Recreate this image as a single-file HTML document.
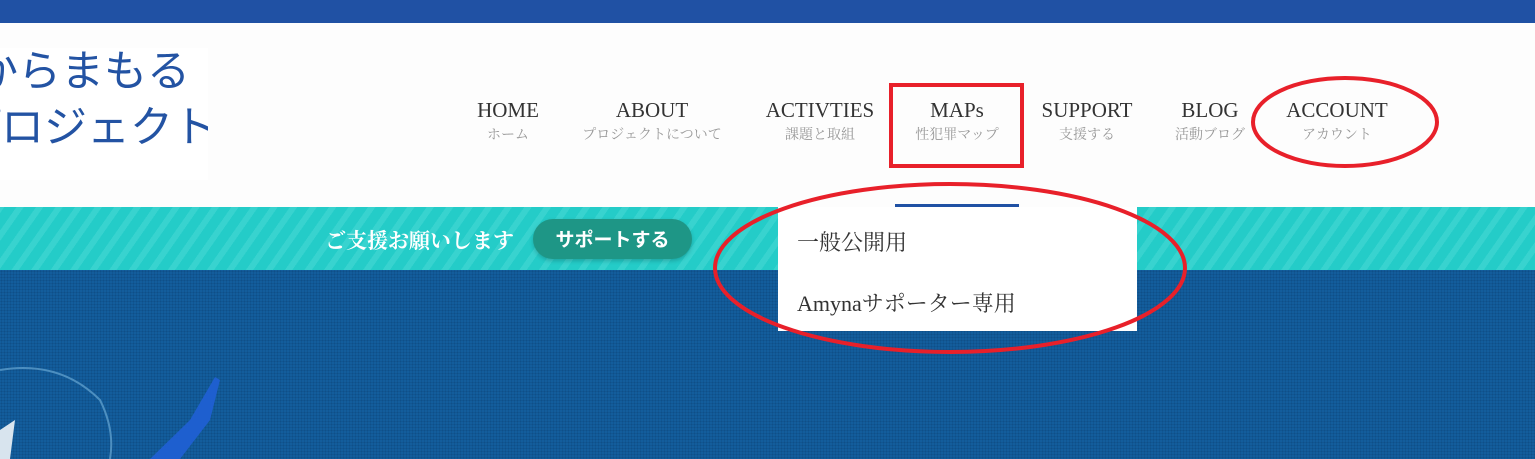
<!DOCTYPE html>
<html><head><meta charset="utf-8"><style>
*{margin:0;padding:0;box-sizing:border-box}
body{width:1535px;height:459px;overflow:hidden;position:relative;background:#fdfdfd;font-family:"Liberation Serif","Noto Serif CJK SC",serif}
.top{position:absolute;left:0;top:0;width:1535px;height:23px;background:#2051a4}
.logo{position:absolute;left:0;top:48px;width:208px;height:132px;background:#fff;color:#2353a3;font-family:"Liberation Sans","Noto Sans CJK JP",sans-serif;font-size:43px;line-height:48px;overflow:hidden}
.logo div{position:absolute;white-space:nowrap}
.nav{position:absolute;top:97px;text-align:center;transform:translateX(-50%);white-space:nowrap}
.nav b{display:block;font-weight:normal;font-size:21px;color:#333;line-height:26px}
.nav i{display:block;font-style:normal;font-size:14px;color:#999;line-height:22px;font-family:"Noto Serif CJK SC",serif}
.band{position:absolute;left:0;top:207px;width:1535px;height:63px;background:repeating-linear-gradient(-55deg,#24ccc8 0 10px,#38d3cf 10px 16px)}
.hero{position:absolute;left:0;top:270px;width:1535px;height:189px;background:#135d9c;background-image:radial-gradient(#0f4f88 40%,transparent 41%);background-size:3px 3px}
.t1{position:absolute;left:325px;top:225px;color:#fff;font-weight:bold;font-size:21px;font-family:"Noto Serif CJK SC",serif}
.btn{position:absolute;left:533px;top:219px;width:159px;height:40px;border-radius:20px;background:#1e9686;color:#fff;font-weight:bold;font-size:19px;text-align:center;line-height:40px;font-family:"Noto Sans CJK JP",sans-serif;box-shadow:0 2px 4px rgba(0,0,0,.2)}
.dd{position:absolute;left:778px;top:207px;width:359px;height:124px;background:#fff}
.dd div{position:absolute;left:19px;font-size:22px;color:#333;font-family:"Liberation Serif","Noto Serif CJK SC",serif}
.ul{position:absolute;left:895px;top:204px;width:124px;height:3px;background:#2051a4}
svg{position:absolute;left:0;top:0}
</style></head><body>
<div class="top"></div>
<div class="logo"><div style="left:-25px;top:0">からまもる</div><div style="left:-42px;top:56px">プロジェクト</div></div>
<div class="nav" style="left:508px"><b>HOME</b><i>ホーム</i></div>
<div class="nav" style="left:652px"><b>ABOUT</b><i>プロジェクトについて</i></div>
<div class="nav" style="left:820px"><b>ACTIVTIES</b><i>課題と取組</i></div>
<div class="nav" style="left:957px"><b>MAPs</b><i>性犯罪マップ</i></div>
<div class="nav" style="left:1087px"><b>SUPPORT</b><i>支援する</i></div>
<div class="nav" style="left:1210px"><b>BLOG</b><i>活動ブログ</i></div>
<div class="nav" style="left:1337px"><b>ACCOUNT</b><i>アカウント</i></div>
<div class="band"></div>
<div class="hero"></div>
<div class="t1">ご支援お願いします</div>
<div class="btn">サポートする</div>
<div class="ul"></div>
<div class="dd"><div style="top:19px">一般公開用</div><div style="top:80px">Amynaサポーター専用</div></div>
<svg width="1535" height="459">
<path d="M0 370 Q60 360 100 400 Q115 430 110 459" fill="none" stroke="#4d8fc0" stroke-width="2"/>
<path d="M215 377 L220 380 L210 420 L180 459 L150 459 L190 420 Z" fill="#1e5fcf"/>
<path d="M0 430 L15 420 L10 459 L0 459 Z" fill="#d8e4ee"/>
<rect x="891" y="85" width="131" height="81" fill="none" stroke="#e8202a" stroke-width="4"/>
<ellipse cx="1345" cy="122" rx="92" ry="44" fill="none" stroke="#e8202a" stroke-width="4"/>
<ellipse cx="950" cy="268" rx="235" ry="84" fill="none" stroke="#e8202a" stroke-width="4"/>
</svg>
</body></html>
